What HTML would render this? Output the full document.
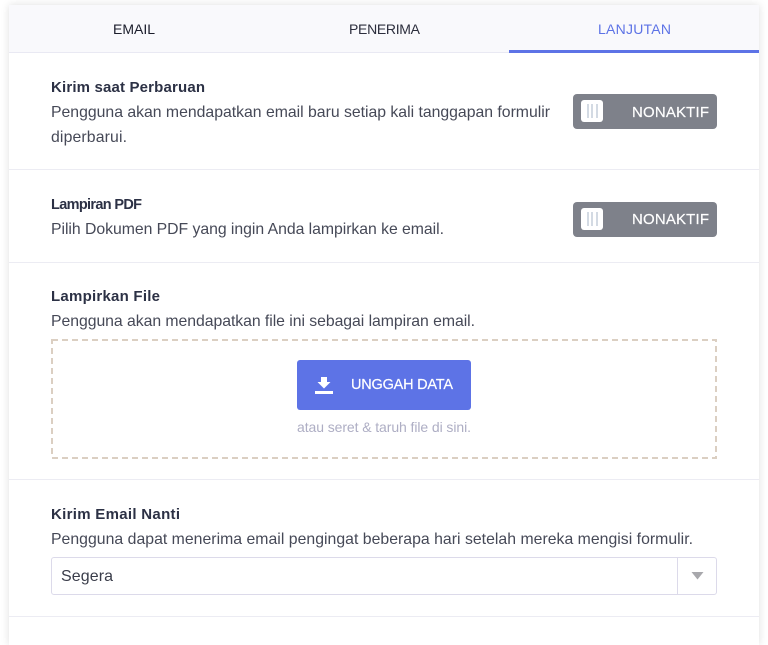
<!DOCTYPE html>
<html lang="id">
<head>
<meta charset="utf-8">
<title>Lanjutan</title>
<style>
html,body{margin:0;padding:0;background:#fff;}
body{width:768px;height:631px;overflow:hidden;position:relative;font-family:"Liberation Sans",sans-serif;}
.card{position:absolute;left:9px;top:5px;width:750px;height:640px;background:#fff;box-shadow:0 0 8px rgba(0,0,0,.13);}
.head{position:absolute;left:9px;top:5px;width:750px;height:47px;background:#f9f9fc;border-bottom:1px solid #e9e9f3;}
.active{position:absolute;left:509px;top:50px;width:250px;height:3px;background:#5d73e6;}
.div{position:absolute;left:9px;width:750px;height:1px;background:#ececf3;}
.toggle{position:absolute;left:573px;width:144px;height:35px;background:#7e818a;border-radius:4px;}
.knob{position:absolute;left:8px;top:6px;width:22px;height:22px;background:#fff;border-radius:3px;}
.knob i{position:absolute;top:4px;width:2px;height:14px;background:#d3dae3;}
.drop{position:absolute;left:51px;top:339px;width:666px;height:120px;box-sizing:border-box;}
.btn{position:absolute;left:297px;top:360px;width:174px;height:50px;background:#5d73e6;border-radius:3px;}
.select{position:absolute;left:51px;top:557px;width:666px;height:38px;box-sizing:border-box;border:1px solid #dcdaea;border-radius:3px;background:#fff;}
.select b{position:absolute;left:625px;top:0;width:1px;height:36px;background:#dcdaea;}
svg.t{position:absolute;left:0;top:0;}
text{font-family:"Liberation Sans",sans-serif;}
</style>
</head>
<body>
<div class="card"></div>
<div class="head"></div>
<div class="active"></div>
<div class="div" style="top:169px"></div>
<div class="div" style="top:262px"></div>
<div class="div" style="top:479px"></div>
<div class="div" style="top:616px"></div>
<div class="toggle" style="top:94px"><div class="knob"><i style="left:5.500px"></i><i style="left:10px"></i><i style="left:14.500px"></i></div></div>
<div class="toggle" style="top:202px"><div class="knob"><i style="left:5.500px"></i><i style="left:10px"></i><i style="left:14.500px"></i></div></div>
<svg class="drop" width="666" height="120" viewBox="0 0 666 120"><rect x="1" y="1" width="664" height="118" fill="none" stroke="#dbcfc2" stroke-width="2" stroke-dasharray="6 4"/></svg>
<div class="btn"></div>
<div class="select"><b></b></div>
<svg class="t" width="768" height="631" viewBox="0 0 768 631">
<g font-size="14">
<text x="113" y="34" fill="#1b1d2b" textLength="42" lengthAdjust="spacing">EMAIL</text>
<text x="349" y="34" fill="#2c2e3d" textLength="71" lengthAdjust="spacing">PENERIMA</text>
<text x="598" y="34" fill="#5d73e6" textLength="73" lengthAdjust="spacing">LANJUTAN</text>
</g>
<g font-size="15" font-weight="700" fill="#2c3145">
<text x="51" y="92" textLength="154" lengthAdjust="spacing">Kirim saat Perbaruan</text>
<text x="51" y="209" font-size="14.500" textLength="91" lengthAdjust="spacing">Lampiran PDF</text>
<text x="51" y="301" textLength="109" lengthAdjust="spacing">Lampirkan File</text>
<text x="51" y="519" textLength="129" lengthAdjust="spacing">Kirim Email Nanti</text>
</g>
<g font-size="15.800" fill="#464957">
<text x="51" y="117" textLength="499" lengthAdjust="spacing">Pengguna akan mendapatkan email baru setiap kali tanggapan formulir</text>
<text x="51" y="142" textLength="76" lengthAdjust="spacing">diperbarui.</text>
<text x="51" y="234" textLength="393" lengthAdjust="spacing">Pilih Dokumen PDF yang ingin Anda lampirkan ke email.</text>
<text x="51" y="326" textLength="424" lengthAdjust="spacing">Pengguna akan mendapatkan file ini sebagai lampiran email.</text>
<text x="51" y="544" textLength="642" lengthAdjust="spacing">Pengguna dapat menerima email pengingat beberapa hari setelah mereka mengisi formulir.</text>
</g>
<g font-size="15" fill="#fff" stroke="#fff" stroke-width=".2">
<text x="632" y="117" textLength="77" lengthAdjust="spacing">NONAKTIF</text>
<text x="632" y="224" textLength="77" lengthAdjust="spacing">NONAKTIF</text>
<text x="351" y="389" font-size="14.500" textLength="102" lengthAdjust="spacing">UNGGAH DATA</text>
</g>
<path d="M321 377h6v5h3.500l-6.500 6.500-6.500-6.500h3.500z" fill="#fff"/>
<rect x="315" y="391" width="18" height="3" fill="#fff"/>
<text x="297" y="432" font-size="14" fill="#aeaec4" textLength="174" lengthAdjust="spacing">atau seret &amp; taruh file di sini.</text>
<text x="61" y="581" font-size="16" fill="#3a3d4a" textLength="52" lengthAdjust="spacing">Segera</text>
<path d="M691.500 572h12l-6 7.500z" fill="#a8a8ac"/>
</svg>
</body>
</html>
